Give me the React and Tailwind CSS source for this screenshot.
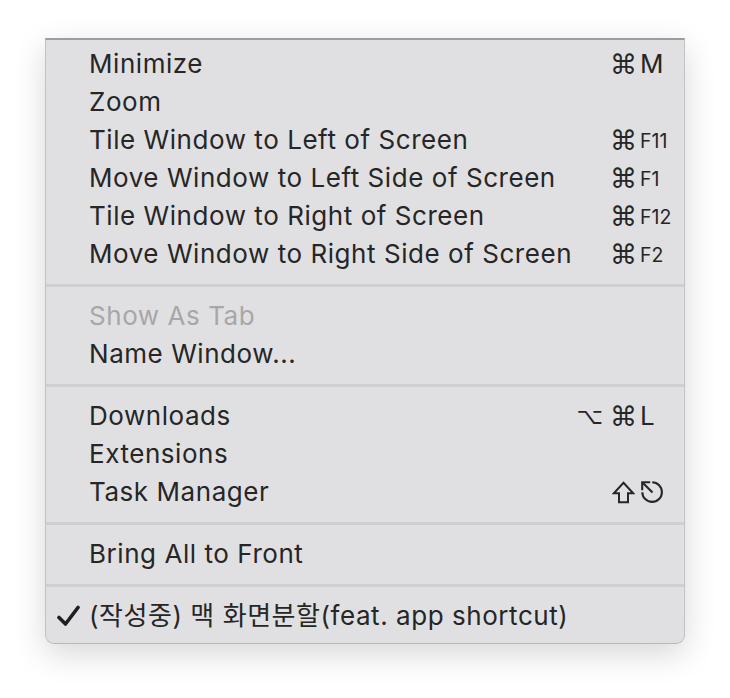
import React from 'react';

const sans = { fontFamily: 'Inter, "Noto Sans CJK KR", "Liberation Sans", sans-serif' };
const sym = { fontFamily: '"DejaVu Sans", sans-serif' };

const ShiftIcon = () => (
  <svg width="23" height="23" viewBox="0 0 23 23" className="inline-block">
    <path
      d="M11.5 1.8 L21.2 12.3 L16 12.3 L16 21.2 L7 21.2 L7 12.3 L1.8 12.3 Z"
      fill="none"
      stroke="#262626"
      strokeWidth="2"
      strokeLinejoin="miter"
    />
  </svg>
);

const EscIcon = () => (
  <svg width="24" height="24" viewBox="0 0 24 24" className="inline-block">
    <path
      d="M12.2 2.3 A9.8 9.8 0 1 1 2.3 12.2"
      fill="none"
      stroke="#262626"
      strokeWidth="2.1"
    />
    <path d="M3 3 L12.5 12.5" stroke="#262626" strokeWidth="2.1" />
    <path d="M2.2 10.2 L2.2 2.2 L10.2 2.2" fill="none" stroke="#262626" strokeWidth="2.1" />
  </svg>
);

const groups = [
  [
    { label: 'Minimize', cmd: true, key: 'M' },
    { label: 'Zoom' },
    { label: 'Tile Window to Left of Screen', cmd: true, key: 'F11', small: true },
    { label: 'Move Window to Left Side of Screen', cmd: true, key: 'F1', small: true },
    { label: 'Tile Window to Right of Screen', cmd: true, key: 'F12', small: true },
    { label: 'Move Window to Right Side of Screen', cmd: true, key: 'F2', small: true },
  ],
  [
    { label: 'Show As Tab', disabled: true },
    { label: 'Name Window...' },
  ],
  [
    { label: 'Downloads', opt: true, cmd: true, key: 'L' },
    { label: 'Extensions' },
    { label: 'Task Manager', icons: true },
  ],
  [{ label: 'Bring All to Front' }],
];

function Row({ item }) {
  return (
    <div className="flex h-[38px] items-center whitespace-nowrap pl-[43px]">
      <span
        className={`flex-1 text-[26px] leading-none tracking-[0.55px] ${item.disabled ? 'text-[#a7a7a9]' : 'text-[#262626]'}`}
      >
        {item.label}
      </span>
      <span className="flex w-[62px] items-center justify-end leading-none text-[#262626]" style={sym}>
        {item.opt && <span className="mr-[7px] text-[23px]">⌥</span>}
        {item.cmd && <span className="text-[27px]">⌘</span>}
        {item.icons && <ShiftIcon />}
      </span>
      <span
        className={`flex w-[44px] items-center leading-none text-[#262626] ${item.icons ? 'ml-[5px]' : 'ml-[3px]'} ${item.small ? 'pt-[3px] text-[19.5px]' : 'text-[26px]'}`}
      >
        {item.icons ? <EscIcon /> : item.key}
      </span>
    </div>
  );
}

function Separator() {
  return (
    <div className="flex h-[24px] items-center">
      <div className="h-[3px] w-full bg-[#cfcfd1]" />
    </div>
  );
}

export default function App() {
  return (
    <div className="min-h-screen bg-white pl-[45px] pt-[38px]" style={sans}>
      <div className="w-[640px] rounded-b-[9px] border-x border-b border-t-2 border-x-[#c2c2c4] border-b-[#b8b8ba] border-t-[#9d9d9f] bg-[#e0e0e2] pb-[8px] pt-[5px] shadow-[0_10px_32px_rgba(0,0,0,0.16)]">
        {groups.map((g, i) => (
          <div key={i}>
            {g.map((item) => (
              <Row key={item.label} item={item} />
            ))}
            <Separator />
          </div>
        ))}

        {/* current tab */}
        <div className="flex h-[38px] items-center whitespace-nowrap pl-[11px]">
          <span className="flex w-[32px] items-center">
            <svg width="23" height="22" viewBox="0 0 23 22">
              <path
                d="M2 12.5 L8.5 19 L21 2.5"
                fill="none"
                stroke="#1f1f1f"
                strokeWidth="3.6"
                strokeLinecap="round"
                strokeLinejoin="round"
              />
            </svg>
          </span>
          <span className="text-[26px] leading-none tracking-[0.55px] text-[#262626]">
            (작성중) 맥 화면분할(feat. app shortcut)
          </span>
        </div>
      </div>
    </div>
  );
}
